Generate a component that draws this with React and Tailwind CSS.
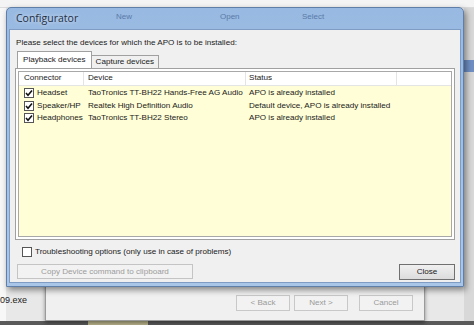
import React from 'react';

const FONT = { fontFamily: '"Liberation Sans", Arial, sans-serif' };

const rows = [
  { conn: 'Headset', dev: 'TaoTronics TT-BH22 Hands-Free AG Audio', status: 'APO is already installed' },
  { conn: 'Speaker/HP', dev: 'Realtek High Definition Audio', status: 'Default device, APO is already installed' },
  { conn: 'Headphones', dev: 'TaoTronics TT-BH22 Stereo', status: 'APO is already installed' },
];

function Check({ checked }) {
  return (
    <div className="w-[10px] h-[10px] border border-[#555] bg-white flex items-center justify-center shrink-0">
      {checked && (
        <svg width="8" height="8" viewBox="0 0 8 8">
          <path d="M1 4 L3 6.2 L7 1.5" stroke="#111" strokeWidth="1.6" fill="none" />
        </svg>
      )}
    </div>
  );
}

export default function App() {
  return (
    <div className="relative w-[474px] h-[325px] overflow-hidden bg-[#e8e8e8] text-[8.1px] text-[#1a1a1a]" style={FONT}>
      {/* desktop / background window */}
      <div className="absolute left-0 top-0 w-[474px] h-[8px] bg-[#f4f4f4] border-b border-[#dcdcdc]" />
      <div className="absolute left-0 top-[8px] w-[6px] h-[313px] bg-[#f7f7f7]" />
      <div className="absolute left-0 top-[294px] text-[9px] text-[#222]">09.exe</div>
      <div className="absolute left-0 top-[321px] w-[474px] h-[4px] bg-[#5a5a5a]" />
      <div className="absolute left-[88px] top-[321px] w-[60px] h-[4px] bg-[#b9b38a]" />
      <div className="absolute left-[464px] top-[8px] w-[10px] h-[313px] bg-[#d8d8d8]">
        <div className="mt-[52px] h-[12px] bg-[#6f8fc4]" />
      </div>
      <div className="absolute left-[45px] top-[270px] w-[380px] h-[51px] bg-[#f0f0f0] border border-[#9a9a9a] shadow-[0_2px_4px_rgba(0,0,0,0.4)] flex justify-end items-end gap-[4px] pr-[11px] pb-[9px]">
        <div className="w-[54px] h-[16px] border border-[#c8c8c8] bg-[#f2f2f2] text-[#9a9a9a] flex items-center justify-center">&lt; Back</div>
        <div className="w-[54px] h-[16px] border border-[#c8c8c8] bg-[#f2f2f2] text-[#9a9a9a] flex items-center justify-center mr-[7px]">Next &gt;</div>
        <div className="w-[54px] h-[16px] border border-[#c8c8c8] bg-[#f2f2f2] text-[#9a9a9a] flex items-center justify-center">Cancel</div>
      </div>

      {/* Configurator dialog */}
      <div className="absolute left-[6px] top-[7px] w-[458px] h-[280px] rounded-t-[5px] border border-[#5f7ea8] bg-gradient-to-b from-[#98b9e1] to-[#a9c6e9] shadow-[2px_3px_6px_rgba(0,0,0,0.45)] flex flex-col px-[2px] pb-[3px]">
        <div className="h-[21px] flex items-center relative shrink-0">
          <span className="pl-[7px] text-[10.5px] text-[#1e2f45] [text-shadow:0_0_4px_rgba(255,255,255,0.8)]" style={{ fontFamily: '"Open Sans", "Liberation Sans", sans-serif' }}>Configurator</span>
          <span className="absolute left-[107px] top-[3px] text-[8px] text-[#5a7aa8]">New</span>
          <span className="absolute left-[211px] top-[3px] text-[8px] text-[#5a7aa8]">Open</span>
          <span className="absolute left-[293px] top-[3px] text-[8px] text-[#5a7aa8]">Select</span>
        </div>
        <div className="flex-1 bg-[#f0f0f0] border border-[#7f9cc4] flex flex-col px-[5px] pt-[7px]">
          <div className="pl-[1px] leading-[11px]">Please select the devices for which the APO is to be installed:</div>
          <div className="mt-[4px] flex items-end pl-[2px] h-[16px]">
            <div className="h-[17px] px-[5px] bg-white border border-[#a0a0a0] border-b-0 flex items-center relative z-10">Playback devices</div>
            <div className="h-[13px] px-[4px] bg-[#f0f0f0] border border-[#a0a0a0] border-b-0 border-l-0 flex items-center">Capture devices</div>
          </div>
          <div className="h-[172px] bg-white border border-[#a0a0a0] p-[2px] flex flex-col">
            <div className="flex-1 border border-[#a8a8a8] bg-[#fffed6] flex flex-col">
              <div className="flex h-[14px] bg-white border-b border-[#e4e4e4] items-center shrink-0">
                <div className="w-[65px] pl-[5px] border-r border-[#e4e4e4] h-full flex items-center">Connector</div>
                <div className="w-[162px] pl-[4px] border-r border-[#e4e4e4] h-full flex items-center">Device</div>
                <div className="w-[151px] pl-[3px] border-r border-[#e4e4e4] h-full flex items-center">Status</div>
              </div>
              <div className="pt-[1px]">
                {rows.map((r) => (
                  <div key={r.conn} className="flex h-[12.5px] items-center">
                    <div className="w-[65px] pl-[5px] flex items-center gap-[3px] whitespace-nowrap">
                      <Check checked />
                      <span>{r.conn}</span>
                    </div>
                    <div className="w-[162px] pl-[4px] whitespace-nowrap">{r.dev}</div>
                    <div className="w-[151px] pl-[3px] whitespace-nowrap">{r.status}</div>
                  </div>
                ))}
              </div>
            </div>
          </div>
          <div className="mt-[6px] flex items-center gap-[3px] pl-[7px]">
            <Check />
            <span>Troubleshooting options (only use in case of problems)</span>
          </div>
          <div className="mt-[6px] flex justify-between pl-[2px]">
            <div className="w-[176px] h-[15px] border border-[#c4c4c4] bg-[#f2f2f2] text-[#9c9c9c] flex items-center justify-center">Copy Device command to clipboard</div>
            <div className="w-[56px] h-[16px] border border-[#707070] bg-gradient-to-b from-[#f0f0f0] to-[#dcdcdc] flex items-center justify-center">Close</div>
          </div>
        </div>
      </div>
    </div>
  );
}
